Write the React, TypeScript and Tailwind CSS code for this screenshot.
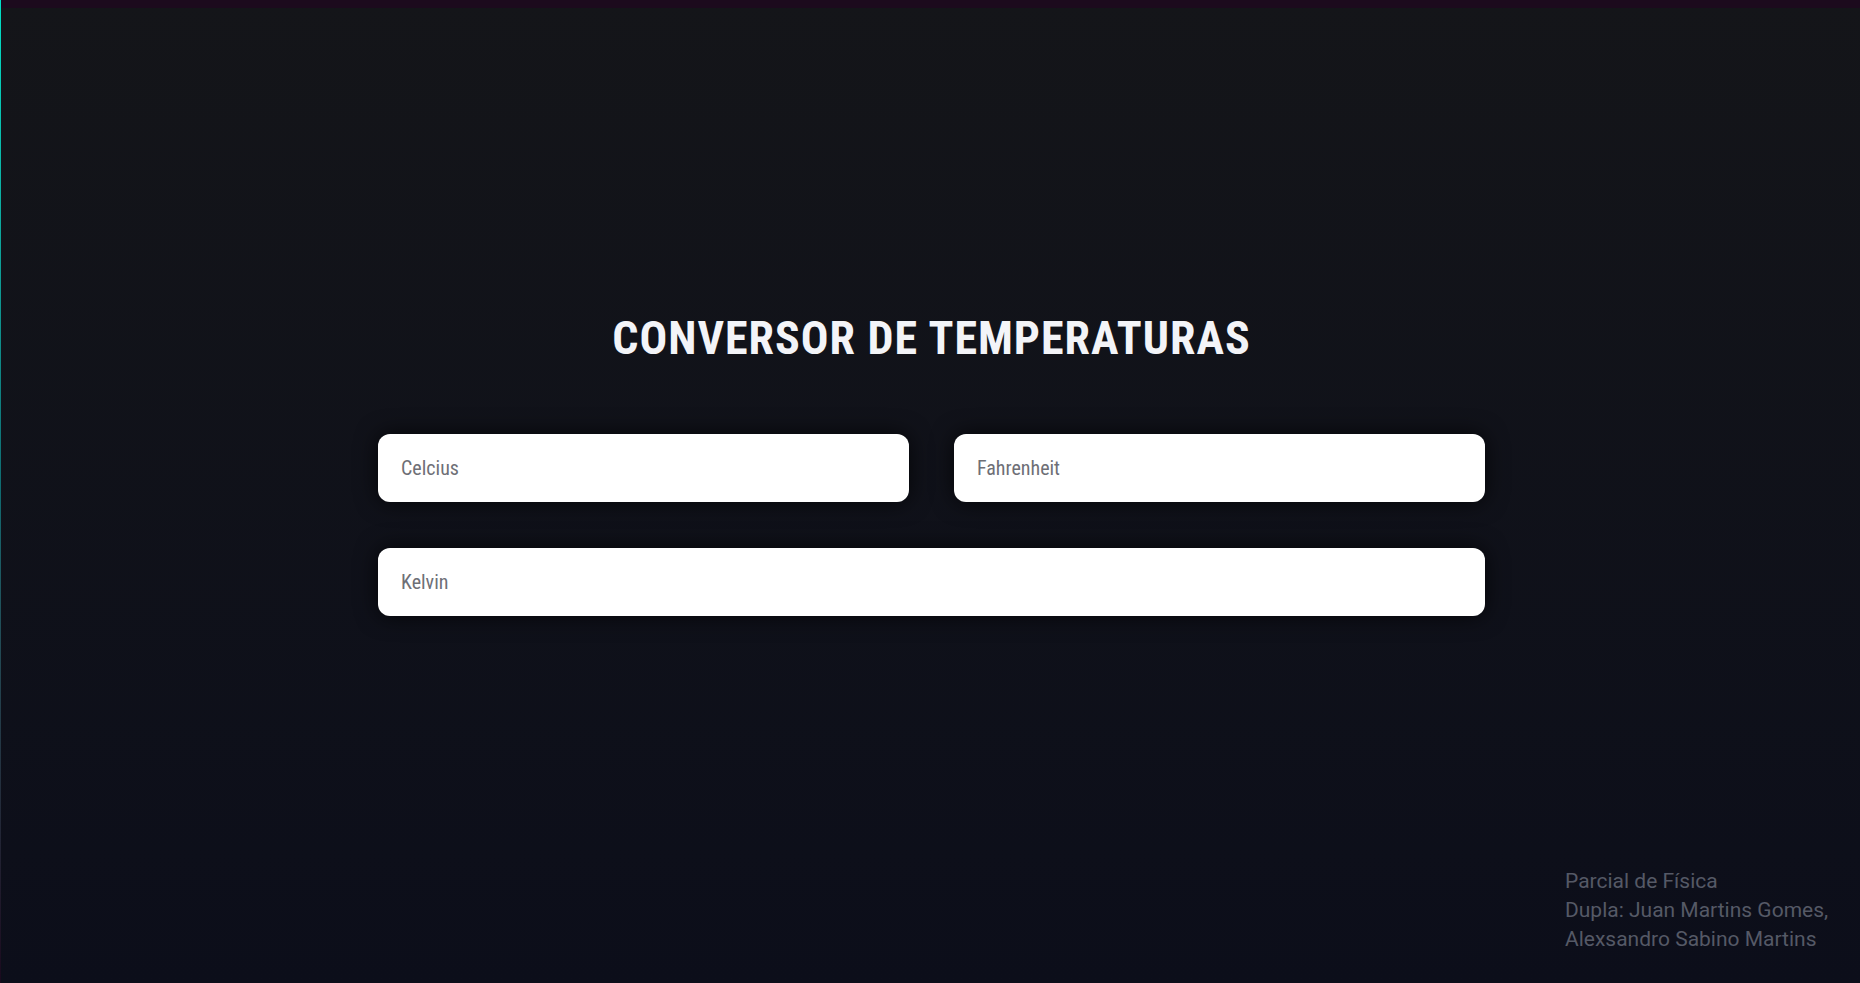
import React, { useState } from "react";

const font = { fontFamily: "Roboto, 'Liberation Sans', sans-serif" };

function Field({
  placeholder,
  value,
  onChange,
}: {
  placeholder: string;
  value: string;
  onChange: (v: string) => void;
}) {
  return (
    <input
      type="text"
      value={value}
      placeholder={placeholder}
      onChange={(e) => onChange(e.target.value)}
      className="h-[68px] w-full rounded-xl bg-white px-[23px] text-[20px] font-normal text-[#333] placeholder:text-[#6e6f76] shadow-[0_0_22px_rgba(0,0,0,0.75)] outline-none [font-stretch:condensed]"
      style={font}
    />
  );
}

export default function App() {
  const [c, setC] = useState("");
  const [f, setF] = useState("");
  const [k, setK] = useState("");

  return (
    <div
      className="relative flex h-[983px] w-full flex-col bg-gradient-to-b from-[#141519] to-[#0c0e1a] pl-[3px]"
      style={font}
    >
      {/* accent bars */}
      <div className="absolute left-0 top-0 h-[8px] w-full bg-[#1c0a1d]" />
      <div className="absolute left-0 top-0 h-full w-px bg-gradient-to-b from-[#00e0c6] via-[#0f6a70] to-[#1a0a1e]" />

      <main className="mx-auto mt-[312px] flex w-[1107px] flex-col items-center">
        <h1 className="text-[46px] font-bold leading-[53px] tracking-[1px] text-[#f3f4f8] [font-stretch:condensed]">
          CONVERSOR DE TEMPERATURAS
        </h1>
        <div className="mt-[69px] grid w-full grid-cols-2 gap-x-[45px] gap-y-[46px]">
          <Field placeholder="Celcius" value={c} onChange={setC} />
          <Field placeholder="Fahrenheit" value={f} onChange={setF} />
          <div className="col-span-2">
            <Field placeholder="Kelvin" value={k} onChange={setK} />
          </div>
        </div>
      </main>

      <footer className="absolute bottom-[29px] left-[1565px] text-[21px] leading-[29px] text-[#555966]">
        <p>Parcial de Física</p>
        <p>Dupla: Juan Martins Gomes,</p>
        <p>Alexsandro Sabino Martins</p>
      </footer>
    </div>
  );
}
